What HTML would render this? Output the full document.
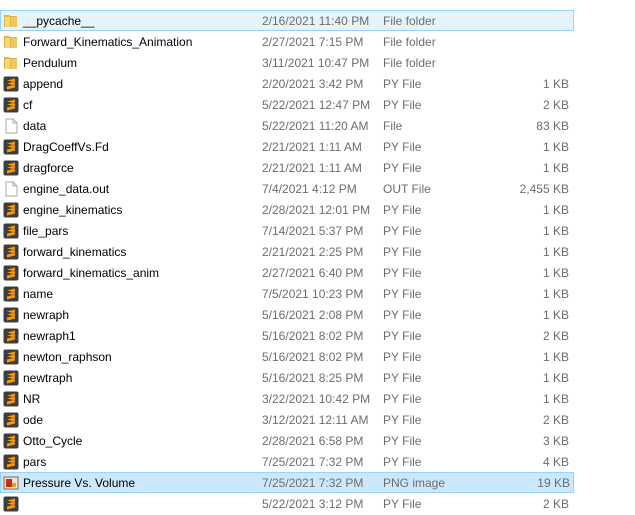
<!DOCTYPE html><html><head><style>
body{margin:0;width:635px;height:501px;background:#fff;overflow:hidden;font-family:"Liberation Sans",sans-serif;font-size:12px;position:relative}
.r{position:absolute;left:0;width:573px;height:21px;line-height:22px}
.r.s1{background:#e5f3fb;border:1px solid #99d1ff;box-sizing:border-box;left:0;width:574px}
.r.s2{background:#cce8ff;border:1px solid #99d1ff;box-sizing:border-box;left:0;width:574px}
.n{position:absolute;left:23px;color:#000}
.d{position:absolute;left:262px;color:#6d6d6d}
.t{position:absolute;left:383px;color:#6d6d6d}
.z{position:absolute;right:4px;color:#6d6d6d}
.i{position:absolute;left:3px;top:3px;width:16px;height:16px}
.s1 .i,.s2 .i{left:2px;top:2px}
.s1 .n,.s2 .n{left:22px}.s1 .d,.s2 .d{left:261px}.s1 .t,.s2 .t{left:382px}.s1 .z,.s2 .z{right:3px}
.s1,.s2{line-height:20px}
</style></head><body>
<svg width="0" height="0" style="position:absolute"><defs>
<symbol id="f" viewBox="0 0 16 16"><path d="M1 2h5l1 1h7v11H1z" fill="#dcb44a"/><path d="M2 4h5v10H2z" fill="#f8d775"/><path d="M8 4h6v10H8z" fill="#f0c75a"/></symbol>
<symbol id="p" viewBox="0 0 16 16"><rect x="0.5" y="0.5" width="15" height="15" rx="2" fill="#3d3d3d"/><path d="M4 4.5L12 2.5v3L4 7.5zM4 7.5l8 2v-3l-8-2zM4 10.5l8-2v3l-8 2z" fill="#ff9800"/></symbol>
<symbol id="g" viewBox="0 0 16 16"><path d="M3 1h7l4 4v10H3z" fill="#fff" stroke="#aaa"/><path d="M10 1v4h4" fill="none" stroke="#aaa"/></symbol>
<symbol id="im" viewBox="0 0 16 16"><rect x="1" y="2" width="14" height="12" fill="#f4e6c8" stroke="#8a6a3a"/><rect x="3" y="4" width="6" height="8" fill="#c0301c"/><rect x="9" y="8" width="4" height="4" fill="#e8a020"/></symbol>
</defs></svg>
<div id="c"></div>
<script>
const rows=[["f","__pycache__","2/16/2021 11:40 PM","File folder","",1],
["f","Forward_Kinematics_Animation","2/27/2021 7:15 PM","File folder",""],
["f","Pendulum","3/11/2021 10:47 PM","File folder",""],
["p","append","2/20/2021 3:42 PM","PY File","1 KB"],
["p","cf","5/22/2021 12:47 PM","PY File","2 KB"],
["g","data","5/22/2021 11:20 AM","File","83 KB"],
["p","DragCoeffVs.Fd","2/21/2021 1:11 AM","PY File","1 KB"],
["p","dragforce","2/21/2021 1:11 AM","PY File","1 KB"],
["g","engine_data.out","7/4/2021 4:12 PM","OUT File","2,455 KB"],
["p","engine_kinematics","2/28/2021 12:01 PM","PY File","1 KB"],
["p","file_pars","7/14/2021 5:37 PM","PY File","1 KB"],
["p","forward_kinematics","2/21/2021 2:25 PM","PY File","1 KB"],
["p","forward_kinematics_anim","2/27/2021 6:40 PM","PY File","1 KB"],
["p","name","7/5/2021 10:23 PM","PY File","1 KB"],
["p","newraph","5/16/2021 2:08 PM","PY File","1 KB"],
["p","newraph1","5/16/2021 8:02 PM","PY File","2 KB"],
["p","newton_raphson","5/16/2021 8:02 PM","PY File","1 KB"],
["p","newtraph","5/16/2021 8:25 PM","PY File","1 KB"],
["p","NR","3/22/2021 10:42 PM","PY File","1 KB"],
["p","ode","3/12/2021 12:11 AM","PY File","2 KB"],
["p","Otto_Cycle","2/28/2021 6:58 PM","PY File","3 KB"],
["p","pars","7/25/2021 7:32 PM","PY File","4 KB"],
["im","Pressure Vs. Volume","7/25/2021 7:32 PM","PNG image","19 KB",2],
["p","","5/22/2021 3:12 PM","PY File","2 KB"]];
let h="";rows.forEach((r,k)=>{h+=`<div class="r${r[5]?' s'+r[5]:''}" style="top:${10+k*21}px"><svg class="i"><use href="#${r[0]}"/></svg><span class="n">${r[1]}</span><span class="d">${r[2]}</span><span class="t">${r[3]}</span><span class="z">${r[4]}</span></div>`});
document.getElementById("c").innerHTML=h;
</script>
</body></html>
